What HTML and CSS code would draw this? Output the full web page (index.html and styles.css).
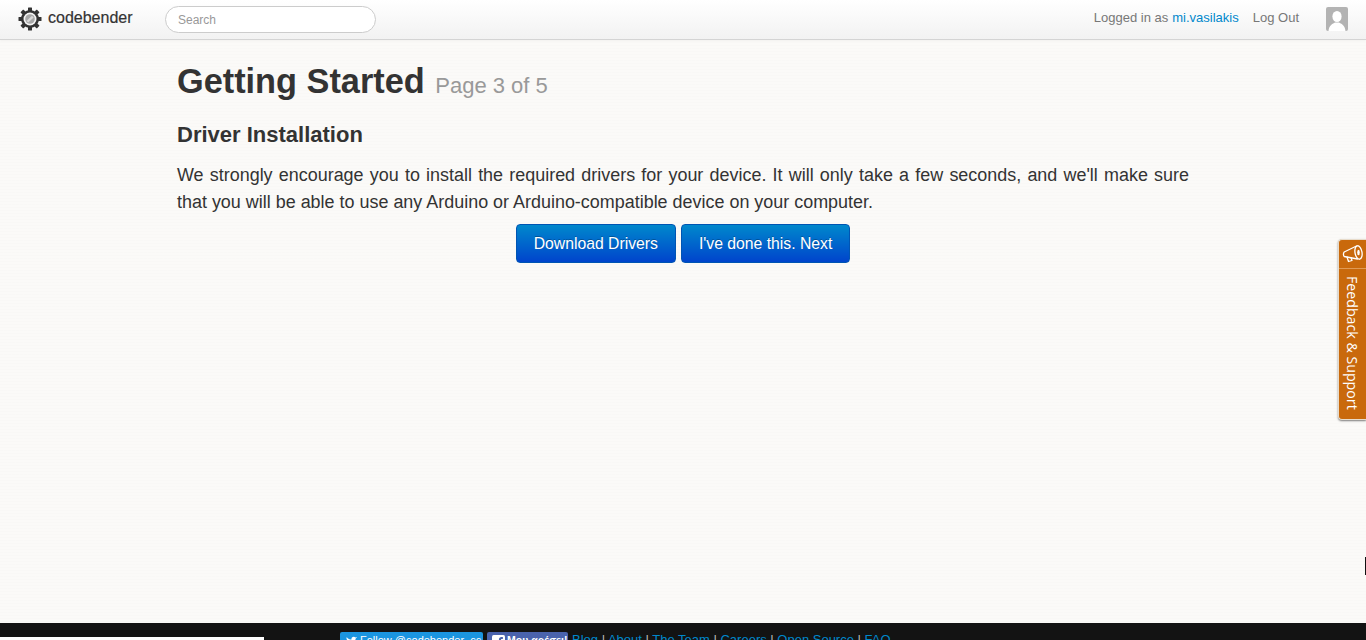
FILE: index.html
```html
<!DOCTYPE html>
<html lang="en">
<head>
<meta charset="utf-8">
<title>Getting Started</title>
<link rel="stylesheet" href="styles.css">
</head>
<body>
<header class="navbar">
  <a class="brand">
    <svg class="gear" viewBox="0 0 24 24" width="24" height="24" aria-hidden="true">
      <g fill="#333">
        <circle cx="12" cy="12" r="9"/>
        <rect x="10" y="0.5" width="4" height="23" rx="0.5"/>
        <rect x="10" y="0.5" width="4" height="23" rx="0.5" transform="rotate(45 12 12)"/>
        <rect x="10" y="0.5" width="4" height="23" rx="0.5" transform="rotate(90 12 12)"/>
        <rect x="10" y="0.5" width="4" height="23" rx="0.5" transform="rotate(135 12 12)"/>
      </g>
      <circle cx="12" cy="12" r="6.5" fill="#f4f4f4"/>
      <circle cx="12" cy="12" r="4.8" fill="#a9a9a9"/>
      <path d="M8.5 14 L14 8.8 L15.6 10.4 L10.2 15.6 Z" fill="#d8d8d8"/>
    </svg>
    <span class="brand-name">codebender</span>
  </a>
  <input class="search" type="text" placeholder="Search">
  <nav class="user">
    <span class="logged">Logged in as</span>
    <a class="username">mi.vasilakis</a>
    <a class="logout">Log Out</a>
    <svg class="avatar" viewBox="0 0 22 24" width="22" height="24" aria-hidden="true">
      <rect width="22" height="24" rx="2" fill="#b3b3b3"/>
      <ellipse cx="11" cy="9.5" rx="4.6" ry="5.6" fill="#fff"/>
      <path d="M2.5 24 C3 18 7 16.500 9 15.500 L13 15.500 C15 16.500 19 18 19.500 24 Z" fill="#fff"/>
    </svg>
  </nav>
</header>

<main class="content">
  <h1 class="title">Getting Started <small class="page">Page 3 of 5</small></h1>
  <h3 class="subtitle">Driver Installation</h3>
  <p class="lead">We strongly encourage you to install the required drivers for your device. It will only take a few seconds, and we'll make sure that you will be able to use any Arduino or Arduino-compatible device on your computer.</p>
  <div class="actions">
    <a class="btn btn-download">Download Drivers</a>
    <a class="btn btn-next">I've done this. Next</a>
  </div>
</main>

<aside class="feedback">
  <svg class="horn" viewBox="0 0 22 22" width="22" height="22" aria-hidden="true">
    <g fill="none" stroke="#fff" stroke-width="1.3" stroke-linejoin="round" stroke-linecap="round">
      <path d="M14.500 4 L2.200 10 C1.200 11 1.200 13.500 2.200 14.500 L15.500 17"/>
      <ellipse cx="16.500" cy="10.500" rx="3.500" ry="6.800" transform="rotate(-10 16.500 10.500)"/>
      <path d="M5 15 L6.500 19.500 L10 18.500 L9 15.800"/>
    </g>
    <ellipse cx="16.500" cy="10.500" rx="1.300" ry="2.700" fill="#fff"/>
  </svg>
  <div class="feedback-text">Feedback &amp; Support</div>
</aside>
<div class="cursor-mark"></div>

<footer class="footer">
  <div class="footer-box"></div>
  <div class="footer-row">
    <a class="social twitter"><svg class="social-icon" viewBox="0 0 16 16" width="13" height="13" aria-hidden="true"><path fill="#fff" d="M15 3.500c-.5.200-1 .4-1.600.4.600-.3 1-.9 1.200-1.500-.5.300-1.100.5-1.800.7a2.800 2.800 0 0 0-4.800 2.500C5.700 5.500 3.600 4.400 2.200 2.700c-.8 1.300-.4 2.900.9 3.700-.5 0-.9-.1-1.300-.3 0 1.400 1 2.500 2.300 2.800-.4.100-.9.100-1.300 0 .4 1.100 1.400 1.900 2.600 2-1.100.8-2.500 1.200-4 1 4 2.500 11.500 1 11.500-7.300.6-.3 1.100-.7 1.500-1.300z"/></svg>Follow @codebender_cc</a>
    <a class="social facebook"><svg class="social-icon" viewBox="0 0 16 16" width="13" height="13" aria-hidden="true"><rect width="16" height="16" rx="2" fill="#fff"/><path fill="#4a63ad" d="M11 16V10h2l.3-2.500H11V6c0-.7.3-1.200 1.200-1.200h1.200V2.600C13 2.500 12.300 2.500 11.600 2.500 9.800 2.500 8.500 3.600 8.500 5.700v1.800h-2V10h2v6z"/></svg>Μου αρέσει!</a>
    <span class="links"><a>Blog</a> | <a>About</a> | <a>The Team</a> | <a>Careers</a> | <a>Open Source</a> | <a>FAQ</a></span>
  </div>
</footer>
</body>
</html>
```

FILE: styles.css
```css
* { box-sizing: border-box; }
html, body { height: 640px; overflow: hidden; }
body {
  margin: 0;
  display: flex;
  flex-direction: column;
  position: relative;
  font-family: "Liberation Sans", Arial, sans-serif;
  color: #333;
  background-color: #fbfaf8;
  background-image: repeating-linear-gradient(0deg, rgba(0,0,0,.006) 0 1px, transparent 1px 3px);
}
.navbar {
  flex: 0 0 40px;
  display: flex;
  align-items: center;
  padding: 0 18px 1px 18px;
  background: linear-gradient(#ffffff, #f2f2f2);
  border-bottom: 1px solid #d4d4d4;
  box-shadow: 0 1px 2px rgba(0,0,0,.04);
}
.brand { display: flex; align-items: center; width: 147px; }
.gear { flex: none; }
.brand-name { margin: -2px 0 0 6px; font-size: 16px; color: #333; -webkit-text-stroke: .2px #333; }
.search {
  width: 211px;
  height: 27px;
  padding: 2px 12px 0;
  border: 1px solid #ccc;
  border-radius: 14px;
  background: #fff;
  font: 12px "Liberation Sans", Arial, sans-serif;
  outline: none;
}
.search::placeholder { color: #999; opacity: 1; }
.user { margin-left: auto; display: flex; align-items: center; font-size: 13px; color: #777; }
.logged, .username, .logout { margin-top: -3px; }
.username { margin-left: 4px; color: #0088cc; }
.logout { margin-left: 14px; color: #777; }
.avatar { margin-left: 27px; }
.content { flex: 1 1 auto; width: 1012px; margin-left: 177px; }
.title { margin: 19px 0 0; font-size: 34.3px; line-height: 44px; font-weight: 700; color: #333; }
.page { font-size: 22px; font-weight: 400; color: #999; margin-left: 1px; }
.subtitle { margin: 13px 0 0; font-size: 22px; line-height: 27px; font-weight: 700; color: #333; }
.lead { margin: 14px 0 0; font-size: 17.96px; line-height: 27px; text-align: justify; color: #333; }
.actions { display: flex; justify-content: center; gap: 5px; margin-top: 8px; }
.btn {
  height: 39px;
  display: flex;
  align-items: center;
  padding: 0 17px;
  font-size: 15.75px;
  color: #fff;
  border: 1px solid #0055b3;
  border-radius: 4px;
  background: linear-gradient(#0088cc, #0044cc);
  text-shadow: 0 -1px 0 rgba(0,0,0,.25);
}
.feedback {
  position: absolute;
  top: 239px;
  left: 1338px;
  width: 28px;
  height: 181px;
  background: #c9690c;
  border: 1px solid #e8dccb;
  border-right: 0;
  border-radius: 4px 0 0 4px;
  box-shadow: 0 1px 2px rgba(0,0,0,.5);
  color: #fff;
}
.horn { display: block; margin: 2px 0 0 3px; }
.feedback-text {
  position: absolute;
  top: 28px;
  left: 0;
  right: 0;
  bottom: 0;
  border-top: 1px solid #e09a55;
  padding: 7px 0 0 2px;
  writing-mode: vertical-rl;
  font: 14.2px/27px "Open Sans", "DejaVu Sans", sans-serif;
}
.cursor-mark {
  position: absolute;
  left: 1365px;
  top: 557px;
  width: 1px;
  height: 18px;
  background: #111;
}
.footer {
  flex: 0 0 17px;
  position: relative;
  overflow: hidden;
  background: #131313;
}
.footer-box {
  position: absolute;
  left: 0;
  top: 14px;
  width: 264px;
  height: 10px;
  background: #fff;
}
.footer-row {
  display: flex;
  align-items: flex-start;
  margin: 9px 0 0 340px;
  font-size: 13px;
  line-height: 16px;
}
.social {
  display: flex;
  align-items: flex-start;
  height: 20px;
  padding: 2px 5px 0;
  border-radius: 2px 2px 0 0;
  color: #fff;
  font-size: 11px;
  line-height: 13px;
  font-weight: 700;
  white-space: nowrap;
}
.social-icon { flex: none; margin: 1px 2px 0 0; }
.twitter { width: 143px; background: #1b95e0; font-weight: 400; }
.facebook { width: 81px; margin-left: 4px; background: #4a63ad; font-size: 10.5px; }
.links { margin-left: 4px; color: #bbb; white-space: nowrap; }
.links a { color: #0088cc; }
```
